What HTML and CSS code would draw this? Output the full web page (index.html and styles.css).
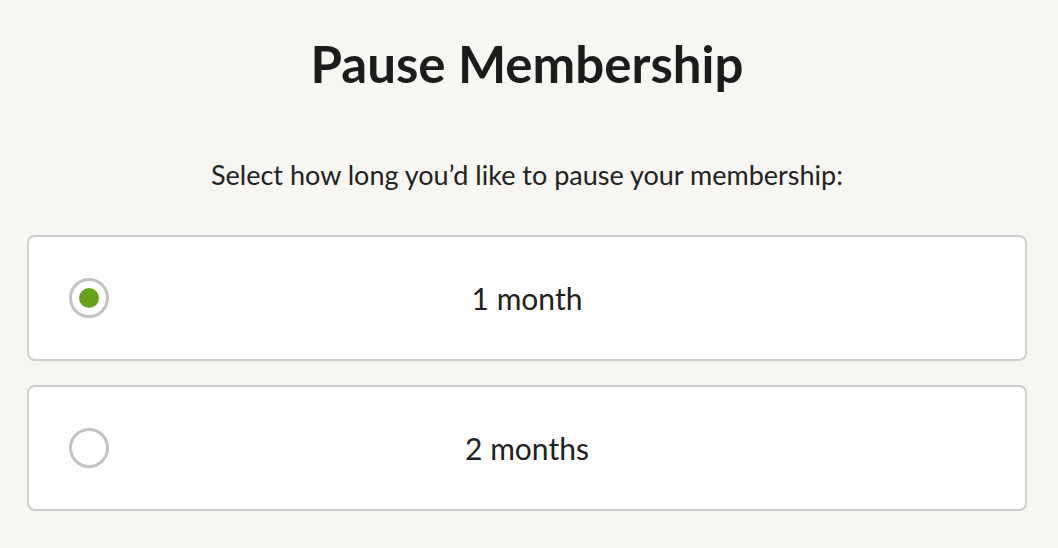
FILE: index.html
```html
<!DOCTYPE html>
<html lang="en">
<head>
<meta charset="utf-8">
<title>Pause Membership</title>
<link rel="stylesheet" href="styles.css">
</head>
<body>
<main class="page">
  <h1 class="title">Pause Membership</h1>
  <p class="subtitle">Select how long you’d like to pause your membership:</p>
  <div class="options">
    <label class="option">
      <span class="radio checked"><span class="dot"></span></span>
      <span class="option-label">1 month</span>
    </label>
    <label class="option">
      <span class="radio"></span>
      <span class="option-label">2 months</span>
    </label>
  </div>
</main>
</body>
</html>
```

FILE: styles.css
```css
html, body {
  margin: 0;
  padding: 0;
  background: #f7f6f3;
}
body {
  font-family: Lato, "Liberation Sans", sans-serif;
  color: #1e1e1e;
}
.page {
  width: 1000px;
  padding: 30px 0 0 27px;
  display: flex;
  flex-direction: column;
}
.title {
  margin: 0;
  font-size: 51px;
  line-height: 67px;
  font-weight: 700;
  text-align: center;
  color: #1c1c1c;
}
.subtitle {
  margin: 59px 0 0;
  font-size: 27px;
  line-height: 38px;
  text-align: center;
  color: #222;
}
.options {
  margin-top: 41px;
  display: flex;
  flex-direction: column;
  gap: 24px;
}
.option {
  box-sizing: border-box;
  height: 126px;
  background: #fff;
  border: 2px solid #cfcfcf;
  border-radius: 8px;
  display: grid;
  grid-template-columns: 1fr auto 1fr;
  align-items: center;
  padding-left: 40px;
  padding-right: 40px;
}
.radio {
  box-sizing: border-box;
  width: 40px;
  height: 40px;
  border: 3px solid #c4c4c4;
  border-radius: 50%;
  display: flex;
  align-items: center;
  justify-content: center;
  justify-self: start;
}
.dot {
  width: 20px;
  height: 20px;
  border-radius: 50%;
  background: #68a21a;
}
.option-label {
  font-size: 30px;
  color: #222;
}
```
